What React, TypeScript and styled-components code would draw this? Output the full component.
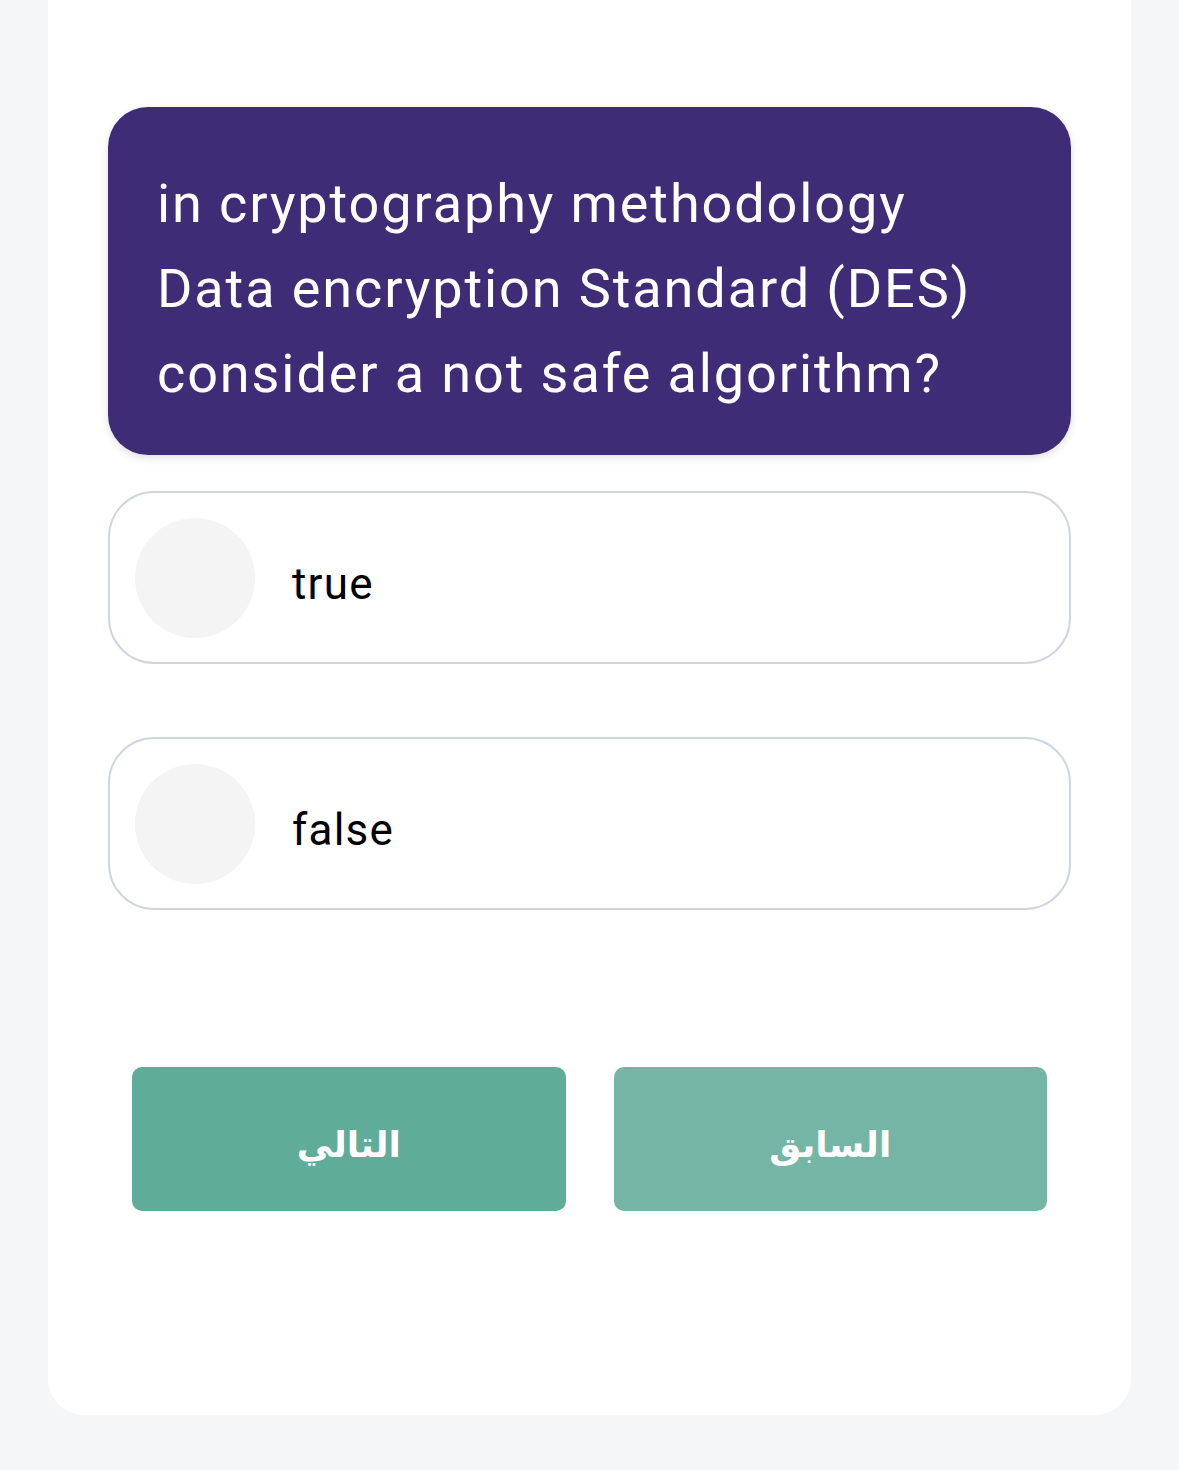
import React from "react";
import styled, { createGlobalStyle } from "styled-components";

const Global = createGlobalStyle`
  html, body { margin: 0; padding: 0; background: #f5f6f8; }
  body { font-family: Roboto, "Noto Sans", "DejaVu Sans", sans-serif; }
  * { box-sizing: border-box; }
`;

const Page = styled.div`
  padding: 0 48px 55px;
  background: #f5f6f8;
`;

const Card = styled.div`
  background: #ffffff;
  border-radius: 0 0 36px 36px;
  padding: 107px 60px 204px;
  display: flex;
  flex-direction: column;
`;

const Question = styled.div`
  background: #3f2c77;
  border-radius: 40px;
  color: #ffffff;
  padding: 54px 30px 39px 49px;
  font-size: 54px;
  line-height: 85px;
  letter-spacing: 1.9px;
  white-space: nowrap;
  box-shadow: 0 3px 8px rgba(0, 0, 0, 0.12);
`;

const Options = styled.div`
  display: flex;
  flex-direction: column;
  gap: 73px;
  margin-top: 36px;
`;

const Option = styled.div`
  display: flex;
  align-items: center;
  gap: 37px;
  height: 173px;
  padding: 0 25px;
  border: 2px solid #d1d6de;
  border-radius: 46px;
  background: #ffffff;
`;

const Radio = styled.div`
  width: 120px;
  height: 120px;
  border-radius: 50%;
  background: #f4f4f4;
  flex: none;
`;

const OptionLabel = styled.span`
  font-size: 44px;
  color: #000000;
  letter-spacing: 1.2px;
  padding-top: 12px;
`;

const Buttons = styled.div`
  display: grid;
  grid-template-columns: 1fr 1fr;
  gap: 48px;
  margin: 157px 24px 0;
`;

const NavButton = styled.button<{ $tone: string }>`
  height: 144px;
  border: none;
  border-radius: 10px;
  background: ${(p) => p.$tone};
  color: #ffffff;
  font-family: "DejaVu Sans", "Noto Sans", sans-serif;
  font-weight: bold;
  font-size: 36px;
  direction: rtl;
  padding-top: 12px;
`;

export default function App() {
  return (
    <>
      <Global />
      <Page>
        <Card>
          <Question>
            in cryptography methodology
            <br />
            Data encryption Standard (DES)
            <br />
            consider a not safe algorithm?
          </Question>
          <Options>
            <Option>
              <Radio />
              <OptionLabel>true</OptionLabel>
            </Option>
            <Option>
              <Radio />
              <OptionLabel>false</OptionLabel>
            </Option>
          </Options>
          <Buttons>
            <NavButton $tone="#5fac98">التالي</NavButton>
            <NavButton $tone="#74b5a6">السابق</NavButton>
          </Buttons>
        </Card>
      </Page>
    </>
  );
}
